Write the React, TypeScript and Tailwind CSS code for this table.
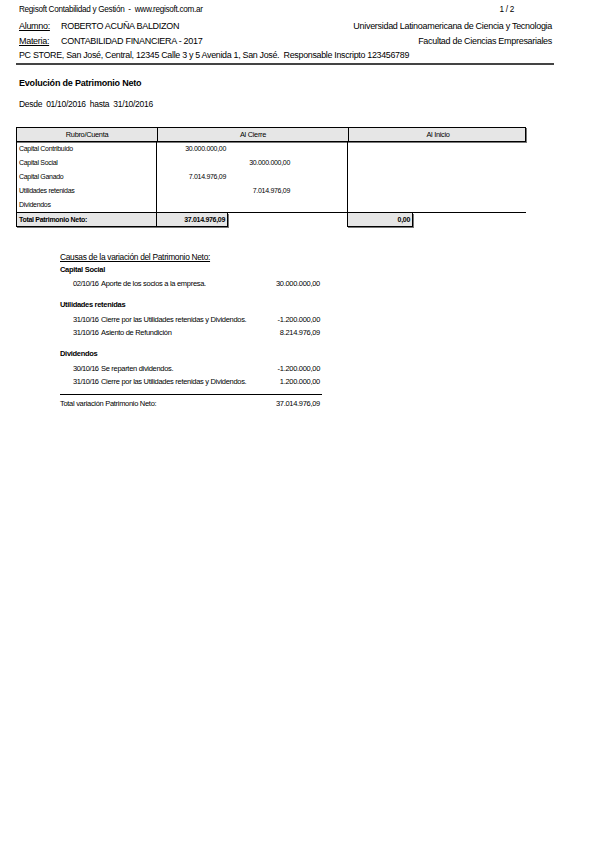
import React from "react";

// Evolución de Patrimonio Neto — printed report page (Regisoft).

const font = { fontFamily: '"Liberation Sans", Arial, sans-serif' };

const rows: { label: string; first?: string; second?: string }[] = [
  { label: "Capital Contribuido", first: "30.000.000,00" },
  { label: "Capital Social", second: "30.000.000,00" },
  { label: "Capital Ganado", first: "7.014.976,09" },
  { label: "Utilidades retenidas", second: "7.014.976,09" },
  { label: "Dividendos" },
];

const causes: { title: string; items: [string, string, string][] }[] = [
  {
    title: "Capital Social",
    items: [["02/10/16", "Aporte de los socios a la empresa.", "30.000.000,00"]],
  },
  {
    title: "Utilidades retenidas",
    items: [
      ["31/10/16", "Cierre por las Utilidades retenidas y Dividendos.", "-1.200.000,00"],
      ["31/10/16", "Asiento de Refundición", "8.214.976,09"],
    ],
  },
  {
    title: "Dividendos",
    items: [
      ["30/10/16", "Se reparten dividendos.", "-1.200.000,00"],
      ["31/10/16", "Cierre por las Utilidades retenidas y Dividendos.", "1.200.000,00"],
    ],
  },
];

function Header() {
  return (
    <div className="ml-[16px] w-[538px] border-b-2 border-[#444] pt-[3px] pb-[1px]">
      <div className="flex h-[13px] items-end justify-between pl-[3px] pr-[40px] text-[8.2px] tracking-[-0.3px]">
        <span>Regisoft Contabilidad y Gestión&nbsp; - &nbsp;www.regisoft.com.ar</span>
        <span>1 / 2</span>
      </div>
      <div className="flex h-[17px] items-end justify-between pl-[3px] pr-[2px] text-[9px] tracking-[-0.3px]">
        <div className="flex">
          <span className="w-[42px] underline">Alumno:</span>
          <span>ROBERTO ACUÑA BALDIZON</span>
        </div>
        <span>Universidad Latinoamericana de Ciencia y Tecnologia</span>
      </div>
      <div className="flex h-[15px] items-end justify-between pl-[3px] pr-[2px] text-[9px] tracking-[-0.3px]">
        <div className="flex">
          <span className="w-[42px] underline">Materia:</span>
          <span>CONTABILIDAD FINANCIERA - 2017</span>
        </div>
        <span>Facultad de Ciencias Empresariales</span>
      </div>
      <div className="flex h-[14px] items-end pl-[3px] text-[8.9px] tracking-[-0.3px]">
        PC STORE, San José, Central, 12345 Calle 3 y 5 Avenida 1, San José.&nbsp; Responsable Inscripto 123456789
      </div>
    </div>
  );
}

function Table() {
  return (
    <div className="ml-[16px] mt-[17px] w-[510px] text-[7px] tracking-[-0.3px]">
      <div className="grid h-[15px] grid-cols-[141px_191px_178px] border border-black bg-[#e6e6e6] text-[7.4px] shadow-[1px_1px_0_#777]">
        <div className="flex items-center justify-center border-r border-black">Rubro/Cuenta</div>
        <div className="flex items-center justify-center border-r border-black">Al Cierre</div>
        <div className="flex items-center justify-center">Al Inicio</div>
      </div>
      <div className="grid grid-cols-[141px_191px_178px]">
        <div className="flex flex-col border-x border-black">
          {rows.map((r) => (
            <div key={r.label} className="flex h-[14px] items-center pl-[2px]">
              {r.label}
            </div>
          ))}
        </div>
        <div className="flex flex-col border-r border-black">
          {rows.map((r) => (
            <div key={r.label} className="flex h-[14px] items-center">
              <span className="w-[69px] text-right">{r.first ?? ""}</span>
              <span className="w-[64px] text-right">{r.second ?? ""}</span>
            </div>
          ))}
        </div>
        <div />
      </div>
      <div className="grid h-[15px] grid-cols-[141px_191px_178px] border-t border-black font-bold">
        <div className="flex items-center border-x border-b border-black bg-[#e6e6e6] pl-[2px] shadow-[1px_1px_0_#777]">
          Total Patrimonio Neto:
        </div>
        <div>
          <div className="flex h-full w-[71px] items-center justify-end border-b border-r border-black bg-[#e6e6e6] pr-[2px] shadow-[1px_1px_0_#777]">
            37.014.976,09
          </div>
        </div>
        <div>
          <div className="-ml-px flex h-full w-[66px] items-center justify-end border-x border-b border-black bg-[#e6e6e6] pr-[2px] shadow-[1px_1px_0_#777]">
            0,00
          </div>
        </div>
      </div>
    </div>
  );
}

function Causes() {
  return (
    <div className="ml-[60px] mt-[25px] w-[262px] text-[7.5px] tracking-[-0.3px]">
      <div className="flex h-[11px] items-center text-[8.4px] underline">Causas de la variación del Patrimonio Neto:</div>
      {causes.map((c, i) => (
        <div key={c.title} className={i === 0 ? "" : "mt-[8px]"}>
          <div className="flex h-[12px] items-center font-bold">{c.title}</div>
          <div className="mt-[2px]">
            {c.items.map(([d, t, v], j) => (
              <div key={j} className="flex h-[13.5px] items-center whitespace-nowrap pl-[13px] pr-[2px]">
                <span className="w-[28px] shrink-0 tracking-[-0.45px]">{d}</span>
                <span className="flex-1">{t}</span>
                <span className="text-right">{v}</span>
              </div>
            ))}
          </div>
        </div>
      ))}
      <div className="mt-[5px] border-t-[1.5px] border-black" />
      <div className="flex h-[17px] items-center justify-between pr-[2px]">
        <span>Total variación Patrimonio Neto:</span>
        <span>37.014.976,09</span>
      </div>
    </div>
  );
}

export default function App() {
  return (
    <div className="h-[842px] w-[595px] bg-white text-black" style={font}>
      <Header />
      <div className="ml-[19px] mt-[12px] text-[9px] font-bold tracking-[-0.2px]">Evolución de Patrimonio Neto</div>
      <div className="ml-[19px] mt-[7px] text-[8.5px] tracking-[-0.3px]">Desde&nbsp; 01/10/2016&nbsp; hasta&nbsp; 31/10/2016</div>
      <Table />
      <Causes />
    </div>
  );
}
